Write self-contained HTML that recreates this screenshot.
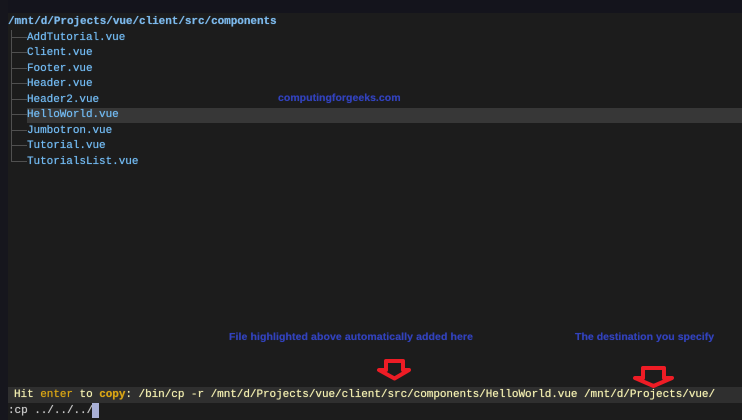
<!DOCTYPE html>
<html>
<head>
<meta charset="utf-8">
<style>
html,body{margin:0;padding:0;background:#1c1c1c}
#p{position:relative;width:742px;height:420px;overflow:hidden;background:#1c1c1c;font-family:"Liberation Mono",monospace;font-size:11px;letter-spacing:-.05px;text-shadow:0 0 .6px currentColor}
.a{position:absolute;white-space:pre;line-height:15px}
.f{left:27px;color:#72baf2}
.g{position:absolute;left:11px;background:#505050}
.n{position:absolute;font-family:"Liberation Sans",sans-serif;font-weight:bold;font-size:10.5px;color:#3242bc;white-space:pre;line-height:12px;text-shadow:0 0 .5px #3242bc}
b{font-weight:bold}
</style>
</head>
<body>
<div id="p">
<div style="position:absolute;left:0;top:0;width:742px;height:13px;background:#14141c"></div>
<div style="position:absolute;left:0;top:0;width:8px;height:420px;background:#16161d"></div>
<div style="position:absolute;left:27px;top:108px;width:715px;height:15px;background:#373737"></div>
<div style="position:absolute;left:8px;top:387px;width:734px;height:16px;background:#2f2f2f"></div>

<div class="a" style="left:8px;top:15px;color:#7cb8ea"><b>/mnt/d/Projects/vue/client/src/components</b></div>

<div class="g" style="top:30px;width:1px;height:131px"></div>
<div class="g" style="top:37px;width:16px;height:1px"></div>
<div class="g" style="top:52px;width:16px;height:1px"></div>
<div class="g" style="top:68px;width:16px;height:1px"></div>
<div class="g" style="top:83px;width:16px;height:1px"></div>
<div class="g" style="top:99px;width:16px;height:1px"></div>
<div class="g" style="top:114px;width:16px;height:1px"></div>
<div class="g" style="top:130px;width:16px;height:1px"></div>
<div class="g" style="top:145px;width:16px;height:1px"></div>
<div class="g" style="top:161px;width:16px;height:1px"></div>

<div class="a f" style="top:31px">AddTutorial.vue</div>
<div class="a f" style="top:46px">Client.vue</div>
<div class="a f" style="top:62px">Footer.vue</div>
<div class="a f" style="top:77px">Header.vue</div>
<div class="a f" style="top:93px">Header2.vue</div>
<div class="a f" style="top:108px">HelloWorld.vue</div>
<div class="a f" style="top:124px">Jumbotron.vue</div>
<div class="a f" style="top:139px">Tutorial.vue</div>
<div class="a f" style="top:155px">TutorialsList.vue</div>

<div class="n" style="left:278px;top:92px;letter-spacing:.03px">computingforgeeks.com</div>
<div class="n" style="left:229px;top:331px;letter-spacing:.09px">File highlighted above automatically added here</div>
<div class="n" style="left:575px;top:331px;letter-spacing:.03px">The destination you specify</div>

<svg style="position:absolute;left:0;top:0" width="742" height="420">
<polygon points="386,361 403,361 403,370 409,370 394.5,378.5 379,370 386,370" fill="none" stroke="#ee1c25" stroke-width="4" stroke-linejoin="round"/>
<polygon points="643,368 664,368 664,378 672,378 653.5,386 635,378 643,378" fill="none" stroke="#ee1c25" stroke-width="4" stroke-linejoin="round"/>
</svg>

<div class="a" style="left:14px;top:388px;color:#f2eeb0">Hit <span style="color:#d9a514">enter</span> to <b style="color:#d9a514">copy</b>: /bin/cp -r /mnt/d/Projects/vue/client/src/components/HelloWorld.vue /mnt/d/Projects/vue/</div>
<div class="a" style="left:8px;top:404px;color:#c8c8c8">:cp ../../../</div>
<div style="position:absolute;left:92px;top:403px;width:7px;height:15px;background:#a9b0d6"></div>
</div>
</body>
</html>
